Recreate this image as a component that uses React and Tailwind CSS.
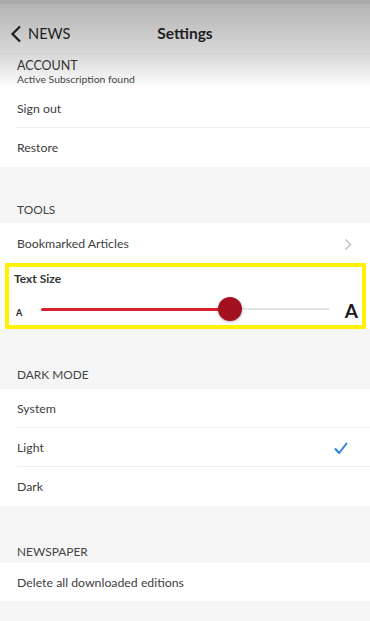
import React from "react";

const font = { fontFamily: "Lato, 'Open Sans', sans-serif" };

function Row({ label, right, border = true }) {
  return (
    <div className="relative flex h-[39px] items-center bg-white pl-[17px] pr-[20px] pt-[2px]">
      <span className="text-[12.3px] text-[#404040]">{label}</span>
      <div className="ml-auto flex items-center">{right}</div>
      {border && <div className="absolute bottom-0 left-[17px] right-0 h-px bg-[#efefef]" />}
    </div>
  );
}

function SectionHeader({ label, cls }) {
  return (
    <div className={`flex items-end bg-[#f5f5f5] pl-[17px] ${cls}`}>
      <span className="text-[11.9px] text-[#444]">{label}</span>
    </div>
  );
}

export default function App() {
  return (
    <div className="flex h-[621px] w-[370px] flex-col overflow-hidden bg-[#f5f5f5]" style={font}>
      <div className="h-[4px] bg-[#a9aaa9]" />
      <div className="relative flex h-[50px] items-center border-b border-[#d0d0d0] bg-linear-to-b from-[#b4b4b4] to-[#d8d8d8] pt-[11px]">
        <div className="flex items-center pl-[10px]">
          <svg width="12" height="18" viewBox="0 0 12 18" className="mr-[6px]">
            <path d="M10 1.5 L2.5 9 L10 16.5" fill="none" stroke="#1e1e1e" strokeWidth="2.2" />
          </svg>
          <span className="text-[14.6px] text-[#222]">NEWS</span>
        </div>
        <div className="absolute inset-0 flex items-center justify-center pt-[11px]">
          <span className="text-[15.5px] font-bold text-[#1e1e1e]">Settings</span>
        </div>
      </div>
      <div className="flex h-[35px] flex-col justify-center bg-linear-to-b from-[#d8d8d8] to-white pl-[17px]">
        <span className="text-[12.5px] leading-[14px] text-[#333]">ACCOUNT</span>
        <span className="text-[10.4px] leading-[12px] text-[#444]">Active Subscription found</span>
      </div>
      <Row label="Sign out" />
      <Row label="Restore" border={false} />
      <SectionHeader label="TOOLS" cls="h-[56px] pb-[4px]" />
      <div className="flex h-[40px] items-center bg-white pl-[17px] pr-[18px] pt-[2px]">
        <span className="text-[12.3px] text-[#404040]">Bookmarked Articles</span>
        <svg width="8" height="13" viewBox="0 0 8 13" className="ml-auto">
          <path d="M1.5 1.5 L6.5 6.5 L1.5 11.5" fill="none" stroke="#c4c4c4" strokeWidth="1.6" />
        </svg>
      </div>
      <div className="bg-white pl-[5px] pr-[4px]">
        <div className="flex h-[66px] flex-col border-[4px] border-[#fff200] pl-[5px] pr-[4px]">
          <span className="mt-[5px] text-[12px] font-bold leading-[14px] text-[#333]">Text Size</span>
          <div className="mt-[11px] flex items-center">
            <span className="mt-[8px] w-[27px] pl-[2px] text-[9px] font-bold text-[#222]">A</span>
            <div className="relative flex h-[24px] w-[288px] items-center">
              <div className="h-[3px] w-[189px] rounded-full bg-[#d9202c]" />
              <div className="h-[2px] flex-1 bg-[#e3e3e3]" />
              <div className="absolute left-[177px] top-0 h-[24px] w-[24px] rounded-full bg-[#a3101f] shadow-[0_1px_3px_rgba(0,0,0,0.3)]" />
            </div>
            <span className="ml-[16px] mt-[2px] text-[19px] font-bold leading-none text-[#1a1a1a]">A</span>
          </div>
        </div>
      </div>
      <SectionHeader label="DARK MODE" cls="h-[60px] pb-[5px]" />
      <Row label="System" />
      <Row
        label="Light"
        right={
          <svg width="14" height="13" viewBox="0 0 14 13" className="mr-[2px]">
            <path d="M1.5 7 L5.2 11 L12.5 1.5" fill="none" stroke="#2f80e0" strokeWidth="2" strokeLinecap="round" strokeLinejoin="round" />
          </svg>
        }
      />
      <Row label="Dark" border={false} />
      <SectionHeader label="NEWSPAPER" cls="h-[57px] pb-[2px]" />
      <div className="flex h-[38px] items-center bg-white pl-[17px] pt-[2px]">
        <span className="text-[12.3px] text-[#404040]">Delete all downloaded editions</span>
      </div>
    </div>
  );
}
